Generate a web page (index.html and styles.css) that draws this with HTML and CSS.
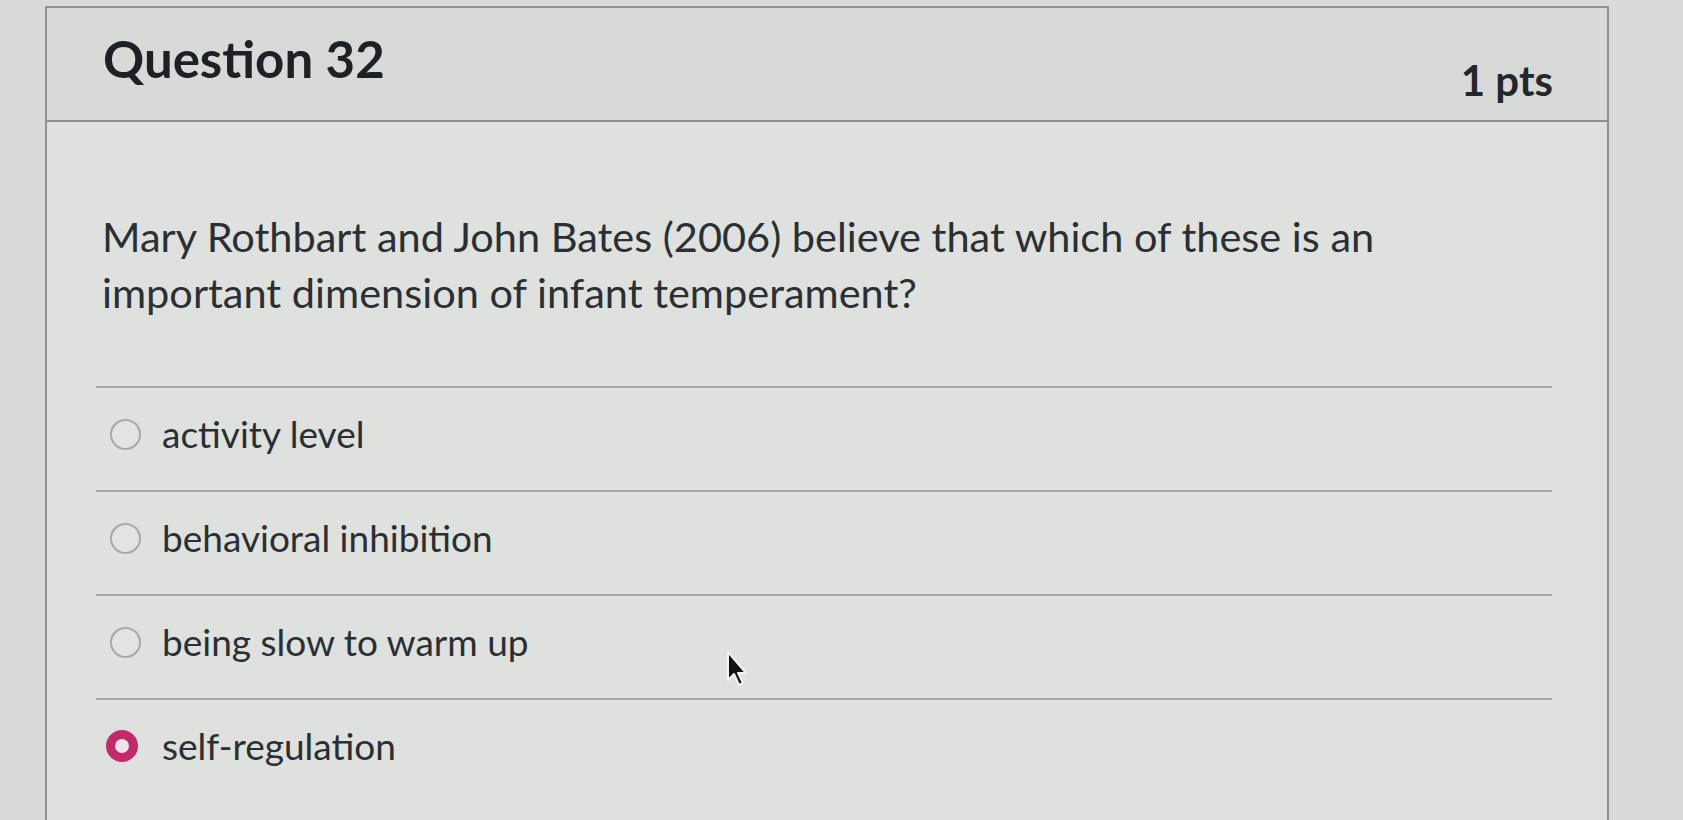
FILE: index.html
```html
<!DOCTYPE html>
<html lang="en">
<head>
<meta charset="utf-8">
<title>Question 32</title>
<link rel="stylesheet" href="styles.css">
</head>
<body>
<div class="page">
  <section class="card">
    <header class="card-header">
      <h2 class="title">Question 32</h2>
      <div class="pts">1 pts</div>
    </header>
    <div class="card-body">
      <p class="question">Mary Rothbart and John Bates (2006) believe that which of these is an important dimension of infant temperament?</p>
      <ul class="answers">
        <li class="answer"><span class="radio"></span><span class="label">activity level</span></li>
        <li class="answer"><span class="radio"></span><span class="label">behavioral inhibition</span></li>
        <li class="answer"><span class="radio"></span><span class="label">being slow to warm up</span></li>
        <li class="answer"><span class="radio checked"></span><span class="label">self-regulation</span></li>
      </ul>
    </div>
  </section>
  <svg class="cursor" width="22" height="38" viewBox="0 0 22 38">
    <path d="M2 2 L2 30 L8 24 L13 35 L17 33 L12 23 L20 23 Z" fill="#111" stroke="#f4f4f4" stroke-width="2" stroke-linejoin="round"/>
  </svg>
</div>
</body>
</html>
```

FILE: styles.css
```css
html, body {
  margin: 0;
  padding: 0;
}

body {
  background: #d9dbd8;
  font-family: Lato, "Open Sans", sans-serif;
  color: #2b3035;
  width: 1683px;
  height: 820px;
  overflow: hidden;
}

.page {
  position: relative;
  height: 820px;
  padding-top: 6px;
  box-sizing: border-box;
}

.card {
  margin-left: 45px;
  width: 1564px;
  height: 830px;
  box-sizing: border-box;
  border: 2px solid #8e9291;
  border-bottom: none;
  background: #dfe1de;
}

.card-header {
  height: 114px;
  box-sizing: border-box;
  background: #d7dad6;
  border-bottom: 2px solid #8c8f8e;
  display: flex;
  justify-content: space-between;
  align-items: flex-start;
  padding: 0 54px 0 56px;
}

.title {
  margin: 0;
  padding-top: 22px;
  font-size: 51px;
  font-weight: 700;
  line-height: 58px;
  color: #1d2024;
}

.pts {
  padding-top: 46px;
  font-size: 42px;
  font-weight: 700;
  line-height: 52px;
  color: #23272b;
}

.card-body {
  padding: 86px 55px 0 55px;
}

.question {
  margin: 0;
  max-width: 1400px;
  font-size: 41.5px;
  line-height: 56px;
  color: #2a2f34;
}

.answers {
  list-style: none;
  margin: 66px 0 0 -6px;
  padding: 0;
}

.answer {
  height: 104px;
  box-sizing: border-box;
  border-top: 2px solid #a5a8a6;
  padding: 0 0 10px 14px;
  display: flex;
  align-items: center;
  gap: 21px;
}

.radio {
  width: 31px;
  height: 31px;
  box-sizing: border-box;
  border-radius: 50%;
  border: 2px solid #a6a9a8;
  background: #e2e4e1;
  flex: none;
}

.radio.checked {
  border: 9px solid #c22a69;
  background: #ece6e8;
  width: 32px;
  height: 32px;
  margin-left: -4px;
  margin-right: 3px;
}

.label {
  font-size: 37px;
  line-height: 48px;
  color: #2a2f34;
}

.cursor {
  position: absolute;
  left: 726px;
  top: 650px;
}
```
